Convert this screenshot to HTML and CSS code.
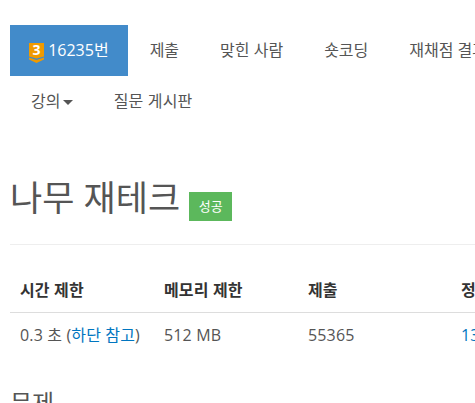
FILE: index.html
```html
<!DOCTYPE html>
<html lang="ko">
<head>
<meta charset="utf-8">
<title>나무 재테크</title>
<link rel="stylesheet" href="styles.css">
</head>
<body>
<div class="page">
  <ul class="nav">
    <li class="nav-item active">
      <a href="#"><svg class="tier" width="15" height="20" viewBox="0 0 15 20" aria-hidden="true"><path d="M0 0H15V13.5L7.5 15.5L0 13.5Z" fill="#f09a00"/><path d="M0 14.5L7.5 17L15 14.5V16.5L7.5 20L0 16.5Z" fill="#f09a00"/><text x="7.5" y="12" text-anchor="middle" class="tier-num">3</text></svg> 16235번</a>
    </li>
    <li class="nav-item"><a href="#">제출</a></li>
    <li class="nav-item"><a href="#">맞힌 사람</a></li>
    <li class="nav-item"><a href="#">숏코딩</a></li>
    <li class="nav-item"><a href="#">재채점 결과</a></li>
    <li class="nav-item"><a href="#">채점 현황</a></li>
  </ul>
  <ul class="nav nav-second">
    <li class="nav-item"><a href="#">강의<span class="caret"></span></a></li>
    <li class="nav-item"><a href="#">질문 게시판</a></li>
  </ul>
  <div class="page-header">
    <h1>나무 재테크 <span class="label">성공</span></h1>
  </div>
  <table class="info">
    <thead>
      <tr><th class="c1">시간 제한</th><th class="c2">메모리 제한</th><th class="c3">제출</th><th class="c4">정답</th></tr>
    </thead>
    <tbody>
      <tr><td>0.3 초 (<a href="#">하단 참고</a>)</td><td>512 MB</td><td>55365</td><td><a href="#">13000</a></td></tr>
    </tbody>
  </table>
  <h2 class="section">문제</h2>
</div>
</body>
</html>
```
FILE: styles.css
```css
html, body {
  margin: 0;
  height: 403px;
  overflow: hidden;
  background: #fff;
}
body {
  font-family: "Open Sans", "Noto Sans CJK KR", sans-serif;
  font-size: 16px;
  line-height: 22px;
  color: #555;
}
.page {
  width: 800px;
  padding: 25px 0 0 10px;
}
.nav {
  display: flex;
  flex-wrap: nowrap;
  margin: 0;
  padding: 0;
  list-style: none;
}
.nav-item + .nav-item { margin-left: 2px; }
.nav-item a {
  display: block;
  height: 21px;
  padding: 15px 19.5px;
  font-size: 16px;
  line-height: 21px;
  color: #555;
  text-decoration: none;
  white-space: nowrap;
}
.nav-second { letter-spacing: 0.15px; }
.nav-second .nav-item:first-child a { padding-left: 21px; }
.nav-item.active a {
  padding-left: 19px;
  background: #428bca;
  color: #fff;
}
.tier {
  vertical-align: -7px;
}
.tier-num {
  font-family: "Open Sans", sans-serif;
  font-size: 14px;
  font-weight: 700;
  fill: #fff;
}
.caret {
  display: inline-block;
  width: 0;
  height: 0;
  margin-left: 2px;
  vertical-align: middle;
  border-top: 5px solid #555;
  border-left: 5px solid transparent;
  border-right: 5px solid transparent;
}
.page-header {
  width: 465px;
  margin-top: 48px;
  padding-bottom: 23px;
  border-bottom: 1px solid #eee;
}
h1 {
  margin: 0;
  font-size: 35px;
  font-weight: 400;
  line-height: 46px;
  color: #555;
}
.label {
  display: inline-block;
  padding: 3px 9.5px;
  font-size: 13px;
  line-height: 23px;
  background: #5cb85c;
  color: #fff;
}
.info {
  margin-top: 24px;
  border-collapse: collapse;
  table-layout: fixed;
  width: 608px;
  letter-spacing: 0.15px;
}
.c1, .c2 { width: 144px; }
.c3 { width: 153px; }
.info th, .info td {
  box-sizing: border-box;
  padding: 10px;
  text-align: left;
}
.info th {
  line-height: 23px;
  font-weight: 700;
  color: #333;
  border-bottom: 1px solid #ddd;
}
.info td { line-height: 24px; }
.info a { color: #0076c0; text-decoration: none; }
.section {
  margin: 29px 0 0;
  font-size: 24px;
  font-weight: 400;
  line-height: 33px;
  color: #555;
}
```
